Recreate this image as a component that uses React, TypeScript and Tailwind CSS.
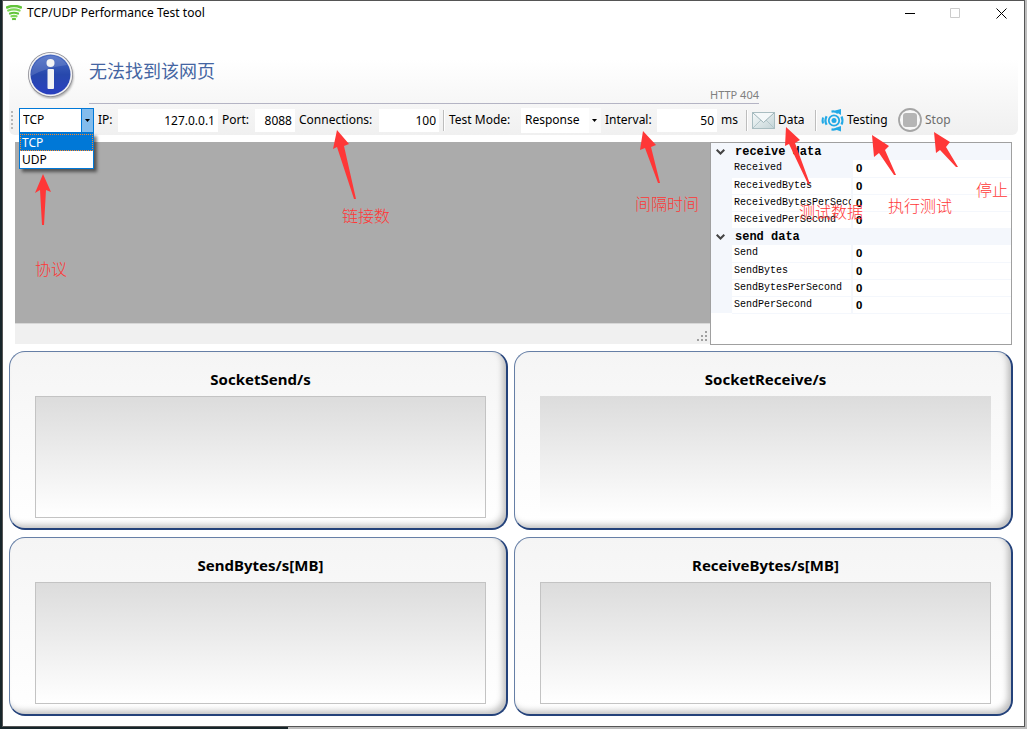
import React, { useState } from 'react';

interface PropertyGroup {
  title: string;
  rows: string[];
}

const PROTOCOLS = ['TCP', 'UDP'];

const GROUPS: PropertyGroup[] = [
  { title: 'receive data', rows: ['Received', 'ReceivedBytes', 'ReceivedBytesPerSecond', 'ReceivedPerSecond'] },
  { title: 'send data', rows: ['Send', 'SendBytes', 'SendBytesPerSecond', 'SendPerSecond'] }
];

const CHARTS = [
  { title: 'SocketSend/s', framed: true },
  { title: 'SocketReceive/s', framed: false },
  { title: 'SendBytes/s[MB]', framed: true },
  { title: 'ReceiveBytes/s[MB]', framed: true }
];

const NOTES = [
  { text: '协议', place: 'left-[35px] top-[256px]' },
  { text: '链接数', place: 'left-[342px] top-[203px]' },
  { text: '间隔时间', place: 'left-[635px] top-[191px]' },
  { text: '测试数据', place: 'left-[799px] top-[199px]' },
  { text: '执行测试', place: 'left-[888px] top-[193px]' },
  { text: '停止', place: 'left-[976px] top-[177px]' }
];

const ARROWS = [
  '43,174 51,192 46,190 44,225 42,225 40,190 35,193',
  '337,130 349,144 344,146 356,199 354,199 337,147 333,149',
  '643,131 656,145 651,147 660,183 658,183 645,148 640,150',
  '786,127 800,140 795,143 810,184 808,184 789,144 785,146',
  '872,135 889,146 885,150 896,175 894,175 879,153 874,157',
  '934,132 950,142 946,147 958,167 956,167 940,150 936,153'
];

function TitleBar() {
  return (
    <header className="flex h-6 items-center">
      <svg className="ml-[3px] size-4" viewBox="0 0 16 16" fill="none" stroke="#62c43a" strokeLinecap="round">
        <path d="M1 2.5Q8 -.5 15 2.5" strokeWidth="2.6" />
        <path d="M2.3 5.5Q8 3.2 13.5 5.5" strokeWidth="2.4" stroke="#7ed857" />
        <path d="M4 8.5Q8 7 12 8.5" strokeWidth="2.2" />
        <path d="M5.5 11.3Q8 10.3 10.5 11.3" strokeWidth="2.2" stroke="#7ed857" />
        <path d="M7 14Q8 13.6 9 14" strokeWidth="2.2" />
      </svg>
      <h1 className="ml-[5px] text-xs leading-4">TCP/UDP Performance Test tool</h1>
      <div className="ml-auto flex h-full">
        <button aria-label="Minimize" className="flex w-[45px] items-center justify-center">
          <svg width="11" height="11" stroke="#000"><path d="M0 5.5h10" /></svg>
        </button>
        <button aria-label="Maximize" disabled className="flex w-[45px] items-center justify-center">
          <svg width="11" height="11" stroke="#ccc" fill="none"><path d="M.5.5h9v9h-9z" /></svg>
        </button>
        <button aria-label="Close" className="flex w-[46px] items-center justify-center">
          <svg width="11" height="11" stroke="#000"><path d="M.5.5l10 10M10.5.5l-10 10" /></svg>
        </button>
      </div>
    </header>
  );
}

function InfoIcon() {
  return (
    <svg className="size-12 shrink-0" viewBox="0 0 48 48">
      <defs>
        <linearGradient id="info-fill" x1="0" y1="0" x2="0" y2="1">
          <stop offset="0" stopColor="#4a6cc4" />
          <stop offset="0.5" stopColor="#2748ac" />
          <stop offset="1" stopColor="#2a40c0" />
        </linearGradient>
        <filter id="info-shadow" x="-20%" y="-20%" width="140%" height="140%">
          <feGaussianBlur stdDeviation="1" />
        </filter>
      </defs>
      <circle cx="24.5" cy="25.5" r="22" fill="#777" opacity="0.6" filter="url(#info-shadow)" />
      <circle cx="23.5" cy="23.5" r="22.5" fill="#8c8c94" />
      <circle cx="23.5" cy="23.5" r="21.7" fill="#f2f2f4" />
      <circle cx="23.5" cy="23.5" r="20" fill="url(#info-fill)" />
      <path d="M4 25a19.5 19.5 0 0 1 36-11Q17 17 4 25z" fill="#fff" opacity="0.14" />
      <circle cx="23.5" cy="12" r="4" fill="#f4f4f4" />
      <rect x="20.5" y="18" width="6.5" height="20" rx="1" fill="#f4f4f4" />
    </svg>
  );
}

function Field({ id, label, value, labelWidth, fieldWidth }: {
  id: string;
  label: string;
  value: string;
  labelWidth: string;
  fieldWidth: string;
}) {
  return (
    <div className="flex shrink-0 items-center">
      <label htmlFor={id} className={`whitespace-nowrap ${labelWidth}`}>{label}</label>
      <input id={id} defaultValue={value} className={`h-[23px] bg-white pr-[3px] text-right outline-none ${fieldWidth}`} />
    </div>
  );
}

function Separator() {
  return <div className="h-[21px] w-0.5 shrink-0 border-l border-[#bdbdbd] bg-white" />;
}

function ProtocolBox() {
  const [protocol, setProtocol] = useState('TCP');

  return (
    <div className="relative ml-0.5 w-[75px] shrink-0">
      <select
        aria-label="Protocol"
        value={protocol}
        onChange={e => setProtocol(e.target.value)}
        className="block h-[25px] w-full appearance-none border border-[#0078d7] bg-white pl-[3px] outline-none"
      >
        {PROTOCOLS.map(name => <option key={name}>{name}</option>)}
      </select>
      <div className="pointer-events-none absolute top-0 right-0 flex h-[25px] w-[13px] items-center justify-center border border-[#0078d7] bg-[#83bcec]">
        <svg width="5" height="3"><path d="M0 0h5L2.5 3z" /></svg>
      </div>
      {/* open drop-down list */}
      <ul className="absolute top-[25px] left-0 z-10 w-full border border-[#0078d7] bg-white shadow-[3px_3px_3px_rgba(0,0,0,0.5)]">
        {PROTOCOLS.map(name => (
          <li key={name}>
            <button
              onClick={() => setProtocol(name)}
              className={`block h-[17px] w-full border border-dotted pl-px text-left leading-[15px] ${
                name === protocol ? 'border-[#ff8728] bg-[#0078d7] text-white' : 'border-transparent'
              }`}
            >
              {name}
            </button>
          </li>
        ))}
      </ul>
    </div>
  );
}

function ToolBar() {
  return (
    <div className="flex h-[30px] items-center gap-1 pl-0.5 text-xs leading-4">
      <div className="h-[19px] w-0.5 shrink-0 bg-[repeating-linear-gradient(to_bottom,#b8b8b8_0_2px,transparent_2px_4px)]" />
      <ProtocolBox />
      <Field id="ip" label="IP:" value="127.0.0.1" labelWidth="w-5" fieldWidth="w-[100px]" />
      <Field id="port" label="Port:" value="8088" labelWidth="w-[33px]" fieldWidth="w-10" />
      <Field id="connections" label="Connections:" value="100" labelWidth="w-20" fieldWidth="w-[60px]" />
      <Separator />
      <div className="flex shrink-0 items-center">
        <label htmlFor="mode" className="w-[72px] whitespace-nowrap">Test Mode:</label>
        <div className="relative w-20">
          <select id="mode" className="block h-[25px] w-full appearance-none bg-white pl-1 outline-none">
            <option>Response</option>
          </select>
          <div className="pointer-events-none absolute top-0 right-0 flex h-[25px] w-3 items-center bg-[#fafafa]">
            <svg className="ml-[3px]" width="5" height="3"><path d="M0 0h5L2.5 3z" /></svg>
          </div>
        </div>
      </div>
      <Field id="interval" label="Interval:" value="50" labelWidth="w-[52px]" fieldWidth="w-[60px]" />
      <span className="w-[21px] shrink-0">ms</span>
      <Separator />
      <button className="flex w-[59px] shrink-0 items-center gap-0.5">
        <svg className="size-6" viewBox="0 0 24 24">
          <defs>
            <linearGradient id="mail-fill" x1="0" y1="0" x2="1" y2="1">
              <stop offset="0" stopColor="#f6fafa" />
              <stop offset="1" stopColor="#c3d3d6" />
            </linearGradient>
          </defs>
          <rect x="0.5" y="4.5" width="22" height="16" fill="url(#mail-fill)" stroke="#a9bdc1" />
          <path d="M1 20l8-8M22 20l-8-8" stroke="#b4c6ca" fill="none" />
          <path d="M1 5l10.5 9.5L22 5" stroke="#9cb2b7" fill="#f4f8f9" />
        </svg>
        Data
      </button>
      <Separator />
      <button className="flex w-[73px] shrink-0 items-center gap-0.5">
        <svg className="size-6" viewBox="0 0 24 24" fill="none" stroke="#22a9e6">
          <circle cx="13" cy="12.5" r="2.5" fill="#22a9e6" stroke="none" />
          <circle cx="13" cy="12.5" r="5.2" strokeWidth="1.8" />
          <path d="M5.6 8.2a9 9 0 0 0 0 8.600" strokeWidth="2.2" />
          <path d="M2 9.500a11 11 0 0 0 0 6" strokeWidth="2" />
          <path d="M10.5 3.600a9 9 0 0 1 6.500 1.400M20.5 8.500a9 9 0 0 1 0 8M17 20a9 9 0 0 1-6.500 1.400" strokeWidth="2.2" />
          <path d="M14 2.500l6-1.500v6l-2.500-1.500zM20 18v5.500l-5.500-2 2.500-2.500z" fill="#22a9e6" stroke="none" />
        </svg>
        Testing
      </button>
      <button disabled className="flex shrink-0 items-center gap-[3px] text-[#6d6d6d]">
        <svg className="size-6" viewBox="0 0 24 24">
          <circle cx="12" cy="12" r="11" fill="#f8f8f8" stroke="#a5a5a5" strokeWidth="1.8" />
          <rect x="5" y="5" width="14" height="14" rx="3" fill="#b5b5b5" />
        </svg>
        Stop
      </button>
    </div>
  );
}

function PropertyGrid() {
  return (
    <aside className="w-[302px] shrink-0 border border-[#a0a0a0] bg-white">
      <table className="w-full table-fixed border-collapse">
        <colgroup>
          <col className="w-[21px]" />
          <col className="w-[120px]" />
          <col />
        </colgroup>
        {GROUPS.map(group => (
          <tbody key={group.title}>
            <tr className="h-[17px] bg-[#f4f7fc]">
              <td className="p-0">
                <button aria-label={`Collapse ${group.title}`} className="ml-[5px] block">
                  <svg width="9" height="6" fill="none" stroke="#444" strokeWidth="2"><path d="M.7.7l3.800 3.800L8.300.7" /></svg>
                </button>
              </td>
              <th colSpan={2} className="p-0 pl-[3px] text-left font-['Liberation_Mono',monospace] text-xs leading-4 font-bold">
                {group.title}
              </th>
            </tr>
            {group.rows.map((row, i) => (
              <tr key={row} className="h-[17px]">
                <td className="bg-[#f4f7fc] p-0" />
                <th
                  className={`overflow-hidden border-r-2 border-b border-[#f4f7fc] p-0 pl-0.5 text-left font-['Liberation_Mono',monospace] text-[10px] leading-4 font-normal whitespace-nowrap ${
                    group.title === 'receive data' && i === 0 ? 'bg-[#f4f7fc]' : ''
                  }`}
                >
                  {row}
                </th>
                <td className="border-b border-[#f4f7fc] p-0 pl-[3px] text-[11px] leading-4 font-bold">0</td>
              </tr>
            ))}
          </tbody>
        ))}
      </table>
    </aside>
  );
}

function ChartCard({ title, framed }: { title: string; framed: boolean }) {
  return (
    <section className="flex h-[179px] flex-col rounded-2xl border border-r-2 border-b-2 border-[#24427a] border-t-[#667fa6] border-l-[#667fa6] bg-linear-to-b from-[#f5f5f5] to-white pr-5 pb-2.5 pl-[25px] shadow-[inset_-4px_-4px_6px_-1px_rgba(0,0,0,0.25)]">
      <h2 className="flex h-11 items-end justify-center pb-[7px] text-[15px] leading-5 font-bold">{title}</h2>
      <div className={`flex-1 bg-linear-to-b from-[#dcdcdc] to-white ${framed ? 'border border-[#c3c3c3]' : ''}`} />
    </section>
  );
}

function Annotations() {
  return (
    <div className="pointer-events-none absolute inset-0 z-20 font-['Noto_Sans_CJK_SC',sans-serif] text-base leading-6 font-light text-[#ff3737]">
      <svg className="absolute top-0 left-0" width="1020" height="240" fill="#ff3737">
        {ARROWS.map(points => <polygon key={points} points={points} />)}
      </svg>
      {NOTES.map(note => (
        <span key={note.text} className={`absolute whitespace-nowrap ${note.place}`}>{note.text}</span>
      ))}
    </div>
  );
}

export default function App() {
  return (
    <div className="relative bg-linear-to-r from-[#17252a] from-28% to-[#bdbdbd] to-28% pr-0.5 pb-0.5 pl-0.5 font-['Noto_Sans','Noto_Sans_CJK_SC',sans-serif] text-black">
      <div className="border border-[#555] bg-white">
        <TitleBar />
        <main className="px-1.5 pt-0.5 pb-2.5">
          <div className="rounded-b-md bg-linear-to-b from-white from-30% to-[#f0f0f0]">
            <div className="flex h-[78px] items-start gap-3.5 pt-6 pl-[18px]">
              <InfoIcon />
              <div className="w-[670px] border-b border-[#b4b4c4]">
                <p className="pt-1.5 text-lg leading-7 text-[#4465a2]">无法找到该网页</p>
                <p className="pt-0.5 text-right text-[11px] leading-4 text-[#808080]">HTTP 404</p>
              </div>
            </div>
            <ToolBar />
          </div>
          <div className="mt-[7px] flex h-[203px] pr-1.5 pl-1.5">
            <div className="flex flex-1 flex-col pb-px">
              <div className="flex-1 bg-[#ababab]" />
              <div className="flex h-[21px] items-end justify-end border-t border-[#d7d7d7] bg-[#f0f0f0] p-0.5">
                <svg width="11" height="11" fill="#a0a0a0">
                  <path d="M8 0h2v2h-2zM4 4h2v2h-2zM8 4h2v2h-2zM0 8h2v2h-2zM4 8h2v2h-2zM8 8h2v2h-2z" />
                </svg>
              </div>
            </div>
            <PropertyGrid />
          </div>
          <div className="mt-1.5 mr-[5px] grid grid-cols-2 gap-x-1.5 gap-y-[7px]">
            {CHARTS.map(chart => <ChartCard key={chart.title} title={chart.title} framed={chart.framed} />)}
          </div>
        </main>
      </div>
      <Annotations />
    </div>
  );
}
